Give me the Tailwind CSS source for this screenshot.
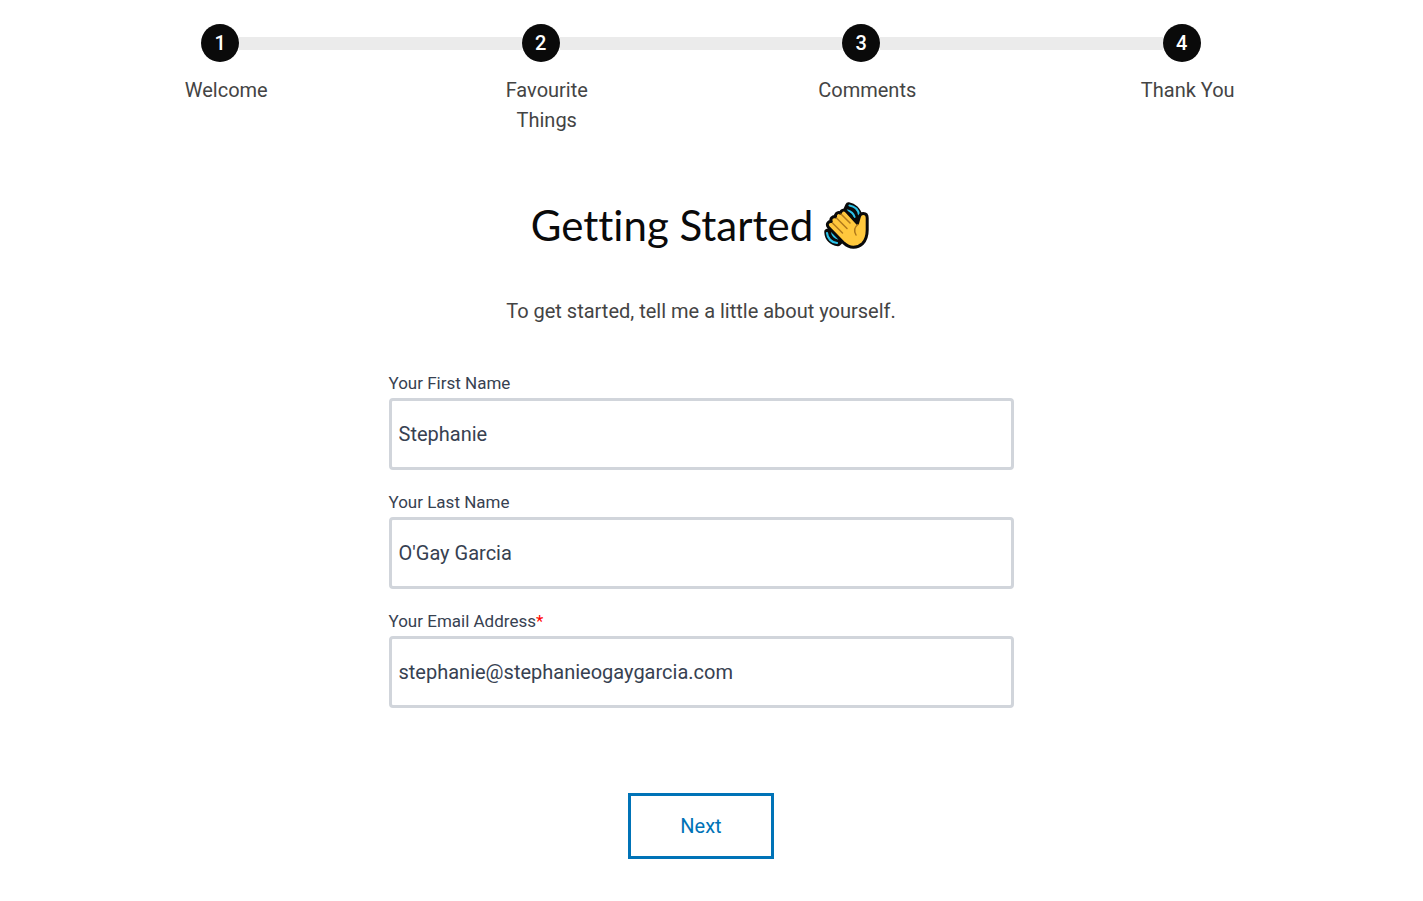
<!DOCTYPE html>
<html lang="en">

<head>
    <meta charset="UTF-8">
    <meta name="viewport" content="width=device-width, initial-scale=1.0">
    <title>Getting Started</title>
    <script src="https://cdn.jsdelivr.net/npm/@tailwindcss/browser@4"></script>
</head>

<body class="bg-white font-['Roboto',sans-serif] text-xl leading-[30px] text-[#444444]">
<div class="pl-[60px] pr-[81px] pt-6 pb-10">
    <!-- steps -->
    <ol class="grid grid-cols-4 text-center">
        <li>
            <div class="flex items-center">
                <span class="h-[13px] flex-1"></span>
                <span class="flex size-[38px] items-center justify-center rounded-full bg-[#0a0a0a] font-medium text-white">1</span>
                <span class="h-[13px] flex-1 bg-[#ebebeb]"></span>
            </div>
            <p class="mx-auto mt-[13px] w-32 pl-3">Welcome</p>
        </li>
        <li>
            <div class="flex items-center">
                <span class="h-[13px] flex-1 bg-[#ebebeb]"></span>
                <span class="flex size-[38px] items-center justify-center rounded-full bg-[#0a0a0a] font-medium text-white">2</span>
                <span class="h-[13px] flex-1 bg-[#ebebeb]"></span>
            </div>
            <p class="mx-auto mt-[13px] w-32 pl-3">Favourite Things</p>
        </li>
        <li>
            <div class="flex items-center">
                <span class="h-[13px] flex-1 bg-[#ebebeb]"></span>
                <span class="flex size-[38px] items-center justify-center rounded-full bg-[#0a0a0a] font-medium text-white">3</span>
                <span class="h-[13px] flex-1 bg-[#ebebeb]"></span>
            </div>
            <p class="mx-auto mt-[13px] w-32 pl-3">Comments</p>
        </li>
        <li>
            <div class="flex items-center">
                <span class="h-[13px] flex-1 bg-[#ebebeb]"></span>
                <span class="flex size-[38px] items-center justify-center rounded-full bg-[#0a0a0a] font-medium text-white">4</span>
                <span class="h-[13px] flex-1"></span>
            </div>
            <p class="mx-auto mt-[13px] w-32 pl-3">Thank You</p>
        </li>
    </ol>

    <h1 class="mt-[65px] flex items-center justify-center gap-2.5 font-['Lato',sans-serif] text-[42px] leading-[50px] text-[#0a0a0a] [font-variant-ligatures:none]">
        Getting Started
        <!-- waving hand -->
        <svg class="size-12" viewBox="0 0 48 48" fill="none" stroke-linecap="round" stroke-linejoin="round" aria-hidden="true">
            <g stroke="#0a0a0a" stroke-width="6.500">
                <path fill="#0a0a0a" d="M25.500 4.500c5 .8 9.500 4.500 10.500 10.500L31 18l-8-8z"/>
                <path fill="#0a0a0a" d="M4.500 31c.3 6 4.500 10.500 10.500 11l3-3-9-9z"/>
            </g>
            <g stroke="#2cc3ea" stroke-width="2.200">
                <path d="M26.500 4.500c5 .8 8.500 4 9.500 9M24.500 9.500c3.500 .7 6 3 7 6.500"/>
                <path d="M4 32c.5 5.500 4.500 9.500 10 10M9 31c.7 3.500 2.500 5.500 6 6.500"/>
            </g>
            <path fill="#ffc83d" stroke="#0a0a0a" stroke-width="3" d="M34.500 22.500 23.500 10.500c-1.500-1.600-3.700-1.700-5-.5-.7.600-1 1.500-.9 2.300-1.300-1-3.100-.8-4.200.3-.9.9-1.200 2.200-.8 3.300-1.300-.5-2.800-.2-3.800.8-1 1.100-1.200 2.600-.5 3.900-1.100-.2-2.200.1-3 .9-1.300 1.300-1.300 3.300.1 4.700l15.600 16c5.500 5.200 13 5.600 18.500.4 4-4 4.700-8.200 4.700-13.600V17c0-2.800-1.600-4.600-3.900-4.600-2.400 0-3.800 1.800-4.200 4.300z"/>
            <path stroke="#b07a1c" stroke-width="1.500" d="m18 13 9 9M13.500 17l10.500 10.500M9.500 22l10 10M35 23.500c-3.500 2.500-4.500 6-2 10.500"/>
        </svg>
    </h1>
    <p class="mt-[46px] text-center">To get started, tell me a little about yourself.</p>

    <form class="mx-auto mt-[45px] max-w-[625px] text-[#374151]">
        <label for="first" class="block text-[17px] leading-6">Your First Name</label>
        <input id="first" type="text" value="Stephanie"
               class="mt-[3px] block h-[72px] w-full rounded-sm border-3 border-[#d1d5db] px-[7px]">
        <label for="last" class="mt-5 block text-[17px] leading-6">Your Last Name</label>
        <input id="last" type="text" value="O'Gay Garcia"
               class="mt-[3px] block h-[72px] w-full rounded-sm border-3 border-[#d1d5db] px-[7px]">
        <label for="email" class="mt-5 block text-[17px] leading-6">Your Email Address<span class="text-[#ff0000]">*</span></label>
        <input id="email" type="email" value="stephanie@stephanieogaygarcia.com" required
               class="mt-[3px] block h-[72px] w-full rounded-sm border-3 border-[#d1d5db] px-[7px]">
        <button type="button" class="mx-auto mt-[85px] block h-[66px] w-[146px] border-3 border-[#0073b7] text-[#0073b7]">Next</button>
    </form>
</div>
</body>

</html>
